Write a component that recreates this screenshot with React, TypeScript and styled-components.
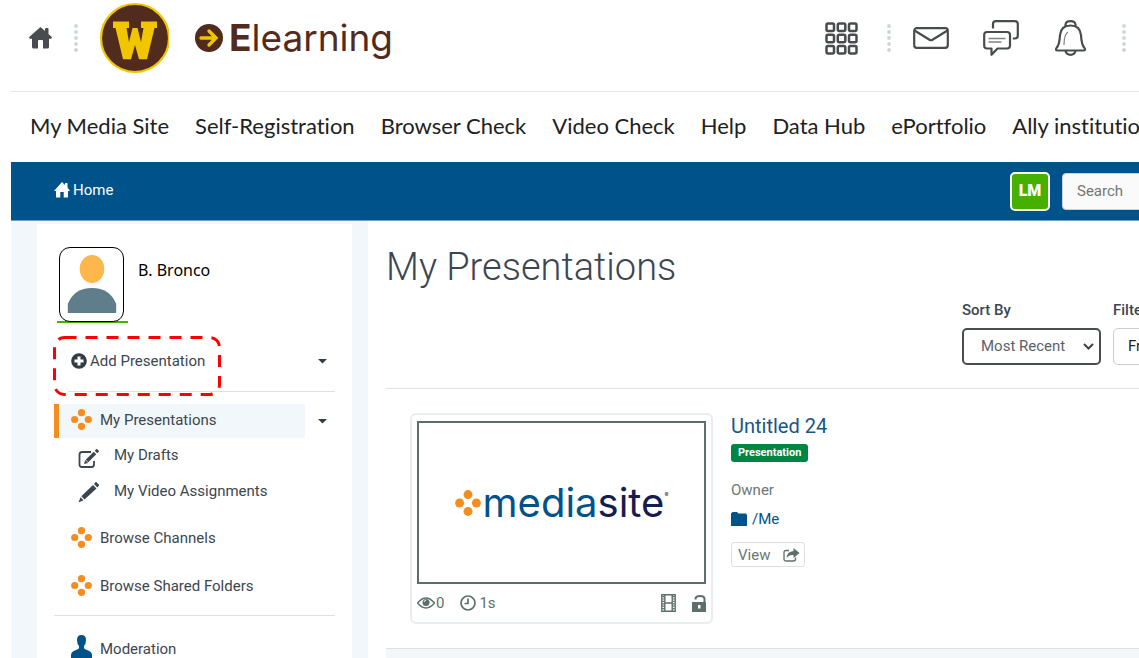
import React from "react";
import styled, { createGlobalStyle } from "styled-components";

const ink = "#3c4650";
const blue = "#00528a";
const orange = "#f58d1e";
const pale = "#f2f7fb";
const line = "#dbe1e7";
const slate = "#5d6f6b";

const GlobalStyle = createGlobalStyle`
  * { box-sizing: border-box; }
  body { margin: 0; background: #fff; font-family: Roboto, "Liberation Sans", sans-serif; color: ${ink}; }
  button, input, select { font-family: inherit; }
  a { color: inherit; text-decoration: none; }
  svg { display: block; flex: none; }
`;

const Page = styled.div`
  height: 100vh;
  padding-left: 11px;
  overflow: hidden;
  display: flex;
  flex-direction: column;
`;

const Masthead = styled.header`
  flex: none;
  height: 92px;
  border-bottom: 1px solid #e4e8ec;
  padding: 0 13px 15px 18px;
  display: flex;
  align-items: center;
  justify-content: space-between;
`;
const Brand = styled.div`
  display: flex;
  align-items: center;
`;
const IconLink = styled.a<{ $gap?: number }>`
  display: flex;
  margin-right: ${(p) => p.$gap ?? 0}px;
`;
const Wordmark = styled.div`
  display: flex;
  align-items: center;
  gap: 6px;
  color: #512b1e;
  font: 400 37px/56px Inter, sans-serif;
  b { font-weight: 700; }
`;
const Tools = styled.div`
  display: flex;
  align-items: center;
`;
const IconButton = styled.button<{ $gap?: number }>`
  display: flex;
  padding: 0;
  border: 0;
  background: none;
  color: #494c4e;
  margin-right: ${(p) => p.$gap ?? 0}px;
`;

const CourseNav = styled.nav`
  flex: none;
  height: 70px;
  padding: 0 0 2px 19px;
  display: flex;
  align-items: center;
  gap: 26px;
  white-space: nowrap;
  font: 400 22px/28px Lato, sans-serif;
  font-variant-ligatures: none;
  color: #202122;
`;

const BlueBar = styled.div`
  flex: none;
  height: 59px;
  background: ${blue};
  display: flex;
  align-items: center;
  justify-content: space-between;
  padding-left: 43px;
  border-bottom: 1px solid #6f9fc2;
`;
const HomeLink = styled.a`
  display: flex;
  align-items: center;
  gap: 3px;
  padding-bottom: 2px;
  color: #fff;
  font-size: 15px;
  line-height: 20px;
`;
const BarRight = styled.div`
  width: 129px;
  display: flex;
  align-items: center;
  gap: 12px;
`;
const Initials = styled.button`
  flex: none;
  width: 40px;
  height: 39px;
  padding: 0 0 2px;
  border: 2px solid #fff;
  border-radius: 5px;
  background: #46b000;
  color: #fff;
  font-size: 16px;
  font-weight: 900;
`;
const SearchBox = styled.input`
  flex: none;
  width: 240px;
  height: 37px;
  border: 1px solid #ccd3d8;
  border-radius: 4px;
  background: #fafafa;
  padding: 0 14px;
  font-size: 15px;
  &::placeholder { color: #757575; opacity: 1; }
`;

const Body = styled.div`
  flex: 1;
  min-height: 0;
  display: flex;
  gap: 16px;
  padding-left: 26px;
  background: ${pale};
`;
const Sidebar = styled.aside`
  flex: none;
  width: 315px;
  margin-top: 3px;
  padding: 23px 17px 0;
  background: #fff;
`;
const Profile = styled.div`
  display: flex;
  gap: 10px;
  height: 76px;
  padding-left: 3px;
`;
const AvatarSlot = styled.div`
  width: 71px;
  height: 76px;
  padding-left: 2px;
  border-bottom: 2px solid #46b000;
`;
const Avatar = styled.div`
  width: 65px;
  height: 75px;
  border: 1px solid #000;
  border-radius: 11px;
  background: #fff;
  display: flex;
  justify-content: center;
  padding-top: 7px;
`;
const UserName = styled.span`
  font: 400 16px/22px "Noto Sans", sans-serif;
  color: #000;
  padding-top: 12px;
`;
const AddRow = styled.div`
  position: relative;
  height: 68px;
  padding: 8px 8px 0 17px;
  display: flex;
  align-items: center;
  justify-content: space-between;
`;
const Highlight = styled.svg`
  position: absolute;
  left: -2px;
  top: 12px;
  pointer-events: none;
`;
const AddButton = styled.button`
  display: flex;
  align-items: center;
  gap: 3px;
  padding: 0;
  border: 0;
  background: none;
  color: ${ink};
  font-size: 15px;
  line-height: 20px;
`;
const CaretButton = styled.button`
  padding: 0;
  border: 0;
  background: none;
`;
const Rule = styled.hr<{ $inset?: number; $space?: number }>`
  margin: ${(p) => p.$space ?? 0}px 0 0 ${(p) => p.$inset ?? 0}px;
  border: 0;
  border-top: 1px solid ${line};
`;
const ActiveRow = styled.div`
  display: flex;
  align-items: center;
  justify-content: space-between;
  padding-right: 8px;
  margin-top: 12px;
`;
const ActiveLink = styled.a`
  flex: none;
  width: 251px;
  height: 34px;
  border-left: 5px solid ${orange};
  background: ${pale};
  display: flex;
  align-items: center;
  gap: 8px;
  padding: 0 0 3px 12px;
  font-size: 15px;
  line-height: 20px;
`;
const SideLink = styled.a<{ $height: number; $sub?: boolean }>`
  display: flex;
  align-items: center;
  height: ${(p) => p.$height}px;
  gap: ${(p) => (p.$sub ? 14 : 8)}px;
  padding: 0 0 3px ${(p) => (p.$sub ? 24 : 17)}px;
  font-size: 15px;
  line-height: 20px;
`;

const Main = styled.main`
  flex: 1;
  min-width: 0;
  background: #fff;
  padding-left: 18px;
  display: flex;
  flex-direction: column;
`;
const Title = styled.h1`
  margin: 0;
  padding-top: 20px;
  font-size: 38px;
  line-height: 52px;
  font-weight: 300;
`;
const Filters = styled.div`
  height: 95px;
  padding-top: 7px;
  display: flex;
  justify-content: flex-end;
`;
const FilterPair = styled.div`
  width: 177px;
  display: flex;
  gap: 12px;
`;
const Field = styled.div`
  flex: none;
  display: flex;
  flex-direction: column;
  gap: 8px;
`;
const FieldLabel = styled.label`
  font-size: 15px;
  line-height: 20px;
  font-weight: 500;
`;
const SelectWrap = styled.div`
  position: relative;
`;
const Chevron = styled.svg`
  position: absolute;
  right: 7px;
  top: 14px;
  pointer-events: none;
`;
const Select = styled.select<{ $strong?: boolean }>`
  display: block;
  appearance: none;
  width: 139px;
  height: 37px;
  border: ${(p) => (p.$strong ? "2px solid #4a4d50" : "1px solid #c9ced2")};
  border-radius: 5px;
  background: #fff;
  color: ${(p) => (p.$strong ? "#5a6268" : "#222")};
  font-size: 15px;
  line-height: 20px;
  padding: 0 ${(p) => (p.$strong ? 17 : 14)}px 2px;
`;
const Item = styled.article`
  border-top: 1px solid ${line};
  padding: 24px;
  display: flex;
  gap: 18px;
  flex: none;
  height: 260px;
`;
const Card = styled.div`
  flex: none;
  width: 303px;
  height: 211px;
  border: 2px solid #e8edf1;
  border-radius: 6px;
  padding: 6px 5px;
`;
const Thumb = styled.a`
  display: flex;
  align-items: center;
  justify-content: center;
  gap: 2px;
  height: 163px;
  border: 2px solid ${slate};
  font: 400 40px/50px Inter, sans-serif;
  color: ${blue};
`;
const Dark = styled.span`
  color: #171c4f;
  sup { font-size: 6px; line-height: 6px; vertical-align: 20px; }
`;
const Stats = styled.div`
  display: flex;
  align-items: center;
  justify-content: space-between;
  height: 38px;
  color: ${slate};
  font-size: 15px;
  line-height: 20px;
`;
const StatGroup = styled.div<{ $gap: number }>`
  display: flex;
  align-items: center;
  gap: ${(p) => p.$gap}px;
`;
const Details = styled.div`
  display: flex;
  flex-direction: column;
  align-items: flex-start;
  font-size: 15px;
  line-height: 20px;
  color: #6b7775;
`;
const ItemTitle = styled.a`
  font-size: 20px;
  line-height: 26px;
  color: #17568a;
`;
const Tag = styled.span`
  margin-top: 5px;
  height: 18px;
  border-radius: 3px;
  background: #008542;
  color: #fff;
  font-size: 11px;
  line-height: 17px;
  font-weight: 700;
  padding: 0 7px;
`;
const Owner = styled.span`
  margin-top: 18px;
`;
const FolderLink = styled.a`
  margin-top: 9px;
  display: flex;
  align-items: center;
  gap: 5px;
  color: ${blue};
`;
const ViewButton = styled.button`
  margin-top: 13px;
  width: 74px;
  height: 25px;
  padding: 0 4px 0 6px;
  border: 1px solid ${line};
  border-radius: 3px;
  background: #fff;
  color: #6b7775;
  font-size: 15px;
  line-height: 20px;
  display: flex;
  align-items: center;
  justify-content: space-between;
`;
const NextItem = styled.div`
  flex: 1;
  border-top: 1px solid ${line};
  background: #f4f7fa;
`;

const Dots = () => (
  <svg width="4" height="28" viewBox="0 0 4 28" fill="#cdd5dc">
    {[2, 8, 14, 20, 26].map((y) => <circle key={y} cx="2" cy={y} r="1.9" />)}
  </svg>
);
const Quad = ({ size = 21 }: { size?: number }) => (
  <svg width={size} height={size} viewBox="0 0 21 21" fill={orange}>
    <circle cx="10.5" cy="3.7" r="3.6" />
    <circle cx="3.7" cy="10.5" r="3.6" />
    <circle cx="17.3" cy="10.5" r="3.6" />
    <circle cx="10.5" cy="17.3" r="3.6" />
  </svg>
);
const Caret = () => (
  <svg width="9" height="5" viewBox="0 0 9 5"><path d="M0 0h9L4.5 4.5z" fill="#333c44" /></svg>
);

const courseLinks = [
  "My Media Site",
  "Self-Registration",
  "Browser Check",
  "Video Check",
  "Help",
  "Data Hub",
  "ePortfolio",
  "Ally institution",
];

export default function App() {
  return (
    <Page>
      <GlobalStyle />
      <Masthead>
        <Brand>
          <IconLink href="#" aria-label="My Home" $gap={22}>
            <svg width="23" height="22" viewBox="0 0 23 22" fill="#494c4e">
              <path d="M11.5 0 16 4V2q0-1 1-1h1.500q1 0 1 1v5l3 2.800q.9 1-.3 2H20V20q0 1.500-1.500 1.500H14V14q0-1-1-1h-3q-1 0-1 1v7.500H4.500Q3 21.500 3 20v-8.200H.8q-1.200-1-.3-2z" />
            </svg>
          </IconLink>
          <Dots />
          <IconLink href="#" aria-label="University" $gap={26}>
            <svg width="91" height="72" viewBox="0 0 91 72">
              <circle cx="57" cy="36" r="34" fill="#512b1e" stroke="#f1c500" strokeWidth="2.200" />
              <path fill="#f1c500" d="M35 19.500H51V26H48.500L51 40 54.500 26H59.500L63 40 65.500 26H63V19.500H79V26H76.500L69 57.300H61L57 43 53 57.300H45L37.500 26H35z" />
            </svg>
          </IconLink>
          <Wordmark>
            <svg width="28" height="28" viewBox="0 0 28 28">
              <circle cx="14" cy="14" r="14" fill="#512b1e" />
              <path d="M6 14h15M14 7l7 7-7 7" fill="none" stroke="#f1c500" strokeWidth="3.400" strokeLinecap="round" />
            </svg>
            <span><b>E</b>learning</span>
          </Wordmark>
        </Brand>
        <Tools>
          <IconButton aria-label="Courses" $gap={29}>
            <svg width="33" height="33" viewBox="0 0 33 33" fill="none" stroke="currentColor" strokeWidth="2.500">
              {[1.5, 12.8, 24].map((y) => [1.5, 12.8, 24].map((x) => <rect key={`${x}-${y}`} x={x} y={y} width="7.500" height="7.500" rx="1.500" />))}
            </svg>
          </IconButton>
          <Dots />
          <IconButton aria-label="Messages" $gap={34}>
            <svg width="58" height="22" viewBox="0 0 58 22" fill="none" stroke="currentColor" strokeWidth="2.200">
              <rect x="23.2" y="1.200" width="33.600" height="19.600" rx="2.500" />
              <path d="M23.500 3.500 38.500 12.800q1.500.9 3 0L56.500 3.500" />
            </svg>
          </IconButton>
          <IconButton aria-label="Discussions" $gap={36}>
            <svg width="36" height="36" viewBox="0 0 36 36" fill="none" stroke="currentColor" strokeWidth="2.200" strokeLinejoin="round">
              <path d="M10 8.500V4q0-2.800 2.800-2.800h19q3 0 3 2.800v11.500q0 3-3 3h-2" />
              <path d="M4 12h20q3 0 3 3v10.500q0 3-3 3H14.500l-6 6.300v-6.300H4q-2.800 0-2.800-3V15q0-3 2.800-3z" />
              <path d="M5.500 18.500h17M5.500 22h13" strokeWidth="1.300" opacity=".7" />
            </svg>
          </IconButton>
          <IconButton aria-label="Notifications" $gap={36}>
            <svg width="31" height="36" viewBox="0 0 31 36" fill="none" stroke="currentColor" strokeWidth="2.200" strokeLinejoin="round">
              <path d="M10.500 6.500V4.500Q11 1.200 15.500 1.200t5 3.300v2" />
              <path d="M15.500 5.500Q25 5.500 26 15q.5 10 3.500 13 1.500 2.500-1 2.500h-26q-2.500 0-1-2.500Q4.500 25 5 15 6 5.500 15.500 5.500z" />
              <path d="M10.500 31q1 3.800 5 3.800t5-3.800" />
              <path d="M13 12q-4 2.500-4 13" strokeWidth="1.200" opacity=".7" />
            </svg>
          </IconButton>
          <Dots />
        </Tools>
      </Masthead>
      <CourseNav>
        {courseLinks.map((t) => (
          <a href="#" key={t}>{t}</a>
        ))}
      </CourseNav>
      <BlueBar>
        <HomeLink href="#">
          <svg width="16" height="16" viewBox="0 0 16 16" fill="#fff"><path d="M8 0l3 3V1h2.500v4.500L16 9h-2v6.500H9.700V10H6.300v5.500H2V9H0z" /></svg>
          Home
        </HomeLink>
        <BarRight>
          <Initials>LM</Initials>
          <SearchBox aria-label="Search" placeholder="Search" />
        </BarRight>
      </BlueBar>
      <Body>
        <Sidebar>
          <Profile>
            <AvatarSlot>
              <Avatar>
                <svg width="50" height="60" viewBox="0 0 50 60">
                  <ellipse cx="25" cy="14" rx="12.300" ry="14" fill="#ffb74d" />
                  <path d="M.8 58V49Q7 33 25 33t24.200 16v9z" fill="#607d8b" />
                </svg>
              </Avatar>
            </AvatarSlot>
            <UserName>B. Bronco</UserName>
          </Profile>
          <AddRow>
            <AddButton>
              <svg width="16" height="16" viewBox="0 0 16 16"><circle cx="8" cy="8" r="7.800" fill="#333c44" /><path d="M8 3.500v9M3.500 8h9" stroke="#fff" strokeWidth="3" /></svg>
              Add Presentation
            </AddButton>
            <CaretButton aria-label="More add options"><Caret /></CaretButton>
            <Highlight width="170" height="62" viewBox="0 0 170 62">
              <rect x="2.500" y="2.500" width="165" height="57" rx="10" fill="none" stroke="#fe0000" strokeWidth="3" strokeDasharray="12 9" />
            </Highlight>
          </AddRow>
          <Rule $inset={14} />
          <ActiveRow>
            <ActiveLink href="#"><Quad />My Presentations</ActiveLink>
            <CaretButton aria-label="Expand My Presentations"><Caret /></CaretButton>
          </ActiveRow>
          <SideLink href="#" $height={36} $sub>
            <svg width="22" height="28" viewBox="0 -8 22 28" fill="none" stroke={ink}>
              <path d="M13 3H4Q1.500 3 1.500 5.500v10Q1.500 18 4 18h9.500q2.500 0 2.500-2.500V12" strokeWidth="1.800" />
              <path d="M9 12 17 4" strokeWidth="3.600" /><path d="M18 3l2-2" strokeWidth="3.600" /><path d="M6 15l1.200-4 3 3z" fill={ink} stroke="none" />
            </svg>
            My Drafts
          </SideLink>
          <SideLink href="#" $height={36} $sub>
            <svg width="22" height="25" viewBox="0 -3 22 25" fill={ink}>
              <path d="M15 4l3.500 3.500L6.500 18.500l-3.200-3.200zM16 3 18 .8l3.300 3.300-1.900 2.300zM2.500 16.300l3 3L.5 21.500z" />
            </svg>
            My Video Assignments
          </SideLink>
          <SideLink href="#" $height={58}><Quad />Browse Channels</SideLink>
          <SideLink href="#" $height={38}><Quad />Browse Shared Folders</SideLink>
          <Rule $space={9} />
          <SideLink href="#" $height={68}>
            <svg width="21" height="28" viewBox="0 0 21 28" fill={blue}><path d="M10.500 0Q15 0 15 5q0 4-2 6v2q0 1 3 2 5 1.500 5 5v8H0v-8q0-3.500 5-5 3-1 3-2v-2Q6 9 6 5q0-5 4.500-5z" /></svg>
            Moderation
          </SideLink>
        </Sidebar>
        <Main>
          <Title>My Presentations</Title>
          <Filters>
            <FilterPair>
              <Field>
                <FieldLabel htmlFor="sort">Sort By</FieldLabel>
                <SelectWrap>
                  <Select id="sort" $strong><option>Most Recent</option></Select>
                  <Chevron width="11" height="9" viewBox="0 0 11 9"><path d="M1 2l4.500 4.500L10 2" fill="none" stroke="#444" strokeWidth="2" /></Chevron>
                </SelectWrap>
              </Field>
              <Field>
                <FieldLabel htmlFor="filter">Filter By</FieldLabel>
                <Select id="filter"><option>From All</option></Select>
              </Field>
            </FilterPair>
          </Filters>
          <Item>
            <Card>
              <Thumb href="#"><Quad size={26} /><span>media<Dark>site<sup>®</sup></Dark></span></Thumb>
              <Stats>
                <StatGroup $gap={16}>
                  <StatGroup $gap={1}>
                    <svg width="18" height="12" viewBox="0 0 18 12" fill="none" stroke={slate} strokeWidth="1.500"><path d="M.5 6q8.500-10 17 0-8.500 10-17 0z" /><circle cx="9" cy="5.500" r="3.500" fill={slate} stroke="none" /><path d="M7 5q.5-1.800 2-1.800" stroke="#fff" strokeWidth="1" /></svg>
                    0
                  </StatGroup>
                  <StatGroup $gap={3}>
                    <svg width="16" height="16" viewBox="0 0 16 16" fill="none" stroke={slate} strokeWidth="1.700"><circle cx="8" cy="8" r="7" /><path d="M8 3.500V8.500H4.500" /></svg>
                    1s
                  </StatGroup>
                </StatGroup>
                <StatGroup $gap={16}>
                  <svg width="15" height="18" viewBox="0 0 15 18" fill="none" stroke={slate}><path d="M.8.8h13.400v16.400H.8zM3.800 9h7.400M3.800 1v16M11.200 1v16" strokeWidth="1.400" /><path d="M2.300 2v14M12.700 2v14" strokeWidth="2" strokeDasharray="1.200 1.200" /></svg>
                  <svg width="14" height="17" viewBox="0 0 14 17"><path d="M3.500 4.500V4q0-3 4.500-3t4.500 3v4" fill="none" stroke={slate} strokeWidth="2" /><path d="M0 7h14V17H0z" fill={slate} /><path d="M6 10h2.500v3.500H6z" fill="#fff" /></svg>
                </StatGroup>
              </Stats>
            </Card>
            <Details>
              <ItemTitle href="#">Untitled 24</ItemTitle>
              <Tag>Presentation</Tag>
              <Owner>Owner</Owner>
              <FolderLink href="#">
                <svg width="16" height="14" viewBox="0 0 16 14" fill={blue}><path d="M0 1.500 1.500 0H6l1.500 1.500H15L16 3v11H0z" /></svg>
                /Me
              </FolderLink>
              <ViewButton>
                View
                <svg width="17" height="14" viewBox="0 0 17 14"><path d="M6 2.500H3Q1 2.500 1 4.500v7Q1 13 3 13h7.500q2 0 2-2V9.500" fill="none" stroke={slate} strokeWidth="1.300" /><path d="M10.500 0 16.500 5l-6 5V7Q6 6.500 3.500 10 4 3.500 10.500 3z" fill={slate} /></svg>
              </ViewButton>
            </Details>
          </Item>
          <NextItem />
        </Main>
      </Body>
    </Page>
  );
}
